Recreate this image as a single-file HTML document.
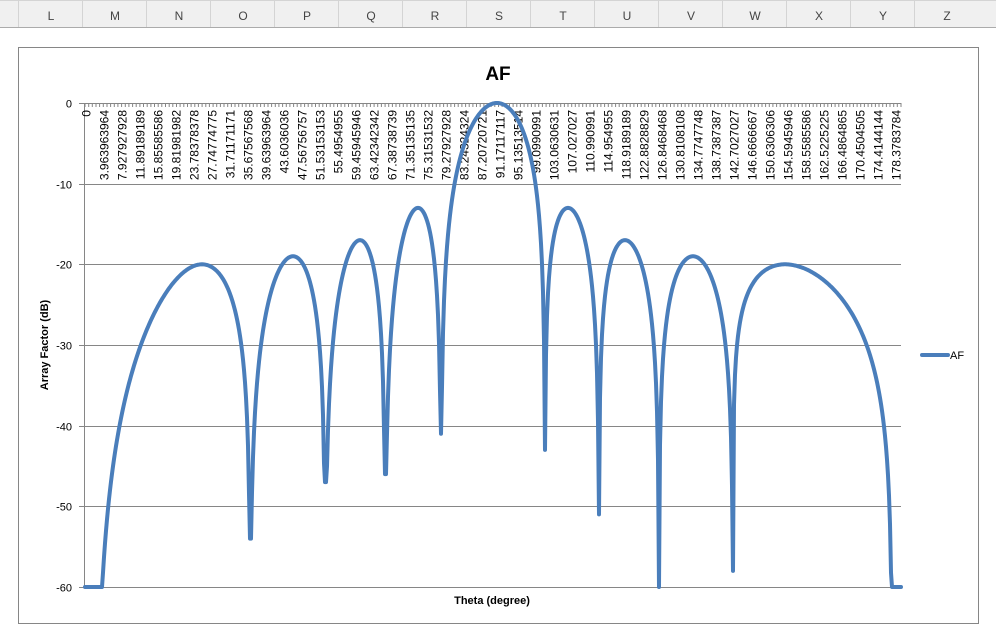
<!DOCTYPE html>
<html><head><meta charset="utf-8">
<style>
html,body{margin:0;padding:0;background:#fff;width:996px;height:643px;overflow:hidden;font-family:"Liberation Sans",Arial,sans-serif}
</style></head><body>
<svg id="s" width="996" height="643" xmlns="http://www.w3.org/2000/svg" font-family="Liberation Sans, Arial, sans-serif">
<rect x="0" y="0" width="996" height="27" fill="#f0f0f0"/>
<line x1="0" y1="27.5" x2="996" y2="27.5" stroke="#ababab"/>
<line x1="0" y1="0.5" x2="996" y2="0.5" stroke="#d4d4d4"/>
<g id="hdr"></g>
<rect x="18.5" y="47.5" width="960" height="576" fill="#fff" stroke="#868686"/>
<text x="498" y="80" font-size="19" font-weight="bold" text-anchor="middle" fill="#000">AF</text>
<g id="grid"></g>
<g id="ticks"></g>
<g id="lbl" fill="#000"></g>
<path id="curve" fill="none" stroke="#4a7ebb" stroke-width="4" stroke-linejoin="round" stroke-linecap="round"/>
<text x="492" y="604" font-size="11" font-weight="bold" text-anchor="middle">Theta (degree)</text>
<text transform="translate(48,345) rotate(-90)" font-size="11" font-weight="bold" text-anchor="middle">Array Factor (dB)</text>
<line x1="922" y1="355" x2="948" y2="355" stroke="#4a7ebb" stroke-width="4" stroke-linecap="round"/>
<text x="950" y="359" font-size="11">AF</text>
</svg>
<script>
var NS="http://www.w3.org/2000/svg";
function el(p,t,a,txt){var e=document.createElementNS(NS,t);for(var k in a)e.setAttribute(k,a[k]);if(txt!=null)e.textContent=txt;p.appendChild(e);return e;}
var hdr=document.getElementById('hdr');
var cols="LMNOPQRSTUVWXYZ";
for(var i=0;i<cols.length;i++){var x0=18+64*i;
el(hdr,'line',{x1:x0+0.5,y1:0,x2:x0+0.5,y2:27,stroke:'#d4d4d4'});
el(hdr,'text',{x:x0+32+1,y:20,'font-size':'12','text-anchor':'middle',fill:'#444'},cols[i]);}
var grid=document.getElementById('grid');
var L=84,R=901,T=103,B=587;
function yv(d){return T+(B-T)*(-d/60);}
var lbl=document.getElementById('lbl');
for(var d=0;d>=-60;d-=10){var y=Math.round(yv(d))+0.5;
if(d<0)el(grid,'line',{x1:L,y1:y,x2:R,y2:y,stroke:'#868686'});
el(grid,'line',{x1:L-5,y1:y,x2:L,y2:y,stroke:'#868686'});
el(lbl,'text',{x:72,y:y+4,'text-anchor':'end','font-size':'11'},String(d));}
el(grid,'line',{x1:L+0.5,y1:T,x2:L+0.5,y2:B+1,stroke:'#868686'});
el(grid,'line',{x1:L,y1:T+0.5,x2:R,y2:T+0.5,stroke:'#868686'});
var tk=document.getElementById('ticks');var dd="";
for(var j=0;j<=223;j++){var x=L+1+j*(R-L-1)/223;dd+="M"+(x.toFixed(1))+" "+T+"v4";}
el(tk,'path',{d:dd,stroke:'#868686','stroke-width':'1'});
for(var k=0;k<46;k++){var th=k*(180/44.4090909);th=k*3.963963964;
var s;
if(k==0)s="0";else{s=th.toPrecision(10);if(s.indexOf('.')>=0)s=s.replace(/0+$/,'').replace(/\.$/,'');}
var x=86+th*(810/178.378);
el(lbl,'text',{transform:'translate('+(x+4.5).toFixed(1)+',110) rotate(-90)','text-anchor':'end','font-size':'12'},s);}
var nulls=[[95,-60],[250,-54],[325,-47],[385,-46],[441,-41],[545,-43],[599,-51],[659,-60],[733,-58],[892,-60]];
var peaks=[[202,-20],[293,-19],[360,-17],[418,-13],[497,0],[568,-13],[625,-17],[693,-19],[785,-20]];
var pts=[[85,-60]];
for(var i=0;i<9;i++){var a=nulls[i][0],b=nulls[i+1][0];var pk=peaks[i];
var tp=(pk[0]-a)/(b-a);var g=Math.log(0.5)/Math.log(tp);
for(var x=a;x<b;x+=1){var t=(x-a)/(b-a);var tw=Math.pow(t,g);var amp=Math.sin(Math.PI*tw);
var db=pk[1]+20*Math.log10(Math.max(amp,1e-6));
var depth=t<0.5?nulls[i][1]:nulls[i+1][1];if(db<depth)db=depth;if(db<-60)db=-60;pts.push([x,db]);}}
pts.push([892,-60]);pts.push([901,-60]);
var p="";pts.forEach(function(q,i){p+=(i?"L":"M")+q[0].toFixed(1)+" "+yv(q[1]).toFixed(1);});
document.getElementById('curve').setAttribute('d',p);
</script>
</body></html>
